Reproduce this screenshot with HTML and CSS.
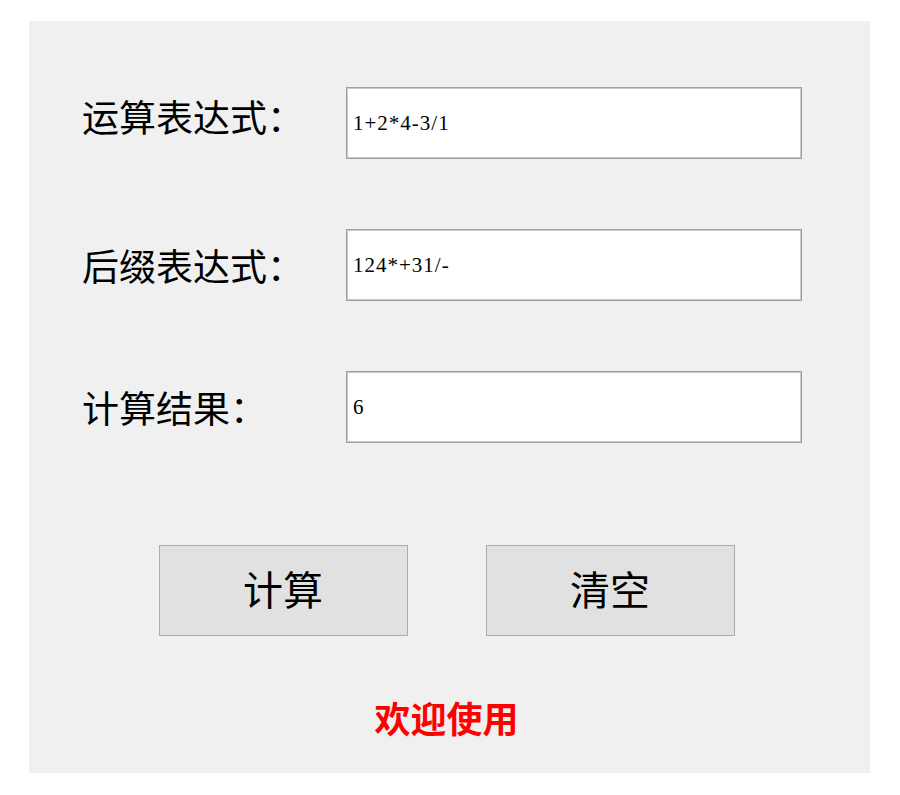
FILE: index.html
```html
<!DOCTYPE html>
<html lang="zh-CN">
<head>
<meta charset="utf-8">
<title>表达式计算</title>
<link rel="stylesheet" href="styles.css">
</head>
<body>
<div class="panel">
  <div class="form">
    <div class="row">
      <label class="label label-first">运算表达式：</label>
      <input class="field" type="text" value="1+2*4-3/1" readonly>
    </div>
    <div class="row">
      <label class="label">后缀表达式：</label>
      <input class="field" type="text" value="124*+31/-" readonly>
    </div>
    <div class="row">
      <label class="label">计算结果：</label>
      <input class="field" type="text" value="6" readonly>
    </div>
  </div>
  <div class="actions">
    <div class="buttons">
      <button class="btn" type="button">计算</button>
      <button class="btn" type="button">清空</button>
    </div>
    <div class="welcome">欢迎使用</div>
  </div>
</div>
</body>
</html>
```
FILE: styles.css
```css
html, body {
  margin: 0;
  padding: 0;
  background: #ffffff;
}

body {
  padding: 21px 0 0 29px;
  font-family: "Noto Sans CJK SC", sans-serif;
}

.panel {
  width: 841px;
  height: 752px;
  background: #f0f0f0;
  box-sizing: border-box;
  padding: 66px 0 0 53px;
}

.form {
  display: flex;
  flex-direction: column;
  gap: 70px;
}

.row {
  display: flex;
  align-items: center;
  height: 72px;
}

.label {
  width: 264px;
  font-size: 37px;
  font-weight: normal;
  line-height: 44px;
  color: #000000;
  font-family: "Noto Sans CJK SC", sans-serif;
}

.label-first {
  margin-bottom: 14px;
}

.field {
  width: 456px;
  height: 72px;
  box-sizing: border-box;
  border: 1px solid #9f9f9f;
  box-shadow: inset 0 0 0 1px #c9c9c9;
  background: #ffffff;
  padding: 0 0 0 6px;
  margin: 0;
  font-family: "Liberation Serif", "Noto Sans CJK SC", serif;
  font-size: 21px;
  letter-spacing: 1px;
  color: #000000;
  outline: none;
}

.actions {
  margin-top: 102px;
  margin-left: 77px;
  width: 575px;
  display: flex;
  flex-direction: column;
  align-items: center;
}

.buttons {
  display: flex;
  gap: 78px;
}

.btn {
  width: 249px;
  height: 91px;
  box-sizing: border-box;
  background: #e1e1e1;
  border: 1px solid #adadad;
  margin: 0;
  padding: 0 0 6px 0;
  font-family: "Noto Sans CJK SC", sans-serif;
  font-size: 40px;
  line-height: 48px;
  color: #000000;
}

.welcome {
  margin-top: 61px;
  margin-right: 0;
  font-family: "Noto Sans CJK SC", sans-serif;
  font-weight: bold;
  font-size: 36px;
  line-height: 40px;
  color: #ff0000;
}
```
